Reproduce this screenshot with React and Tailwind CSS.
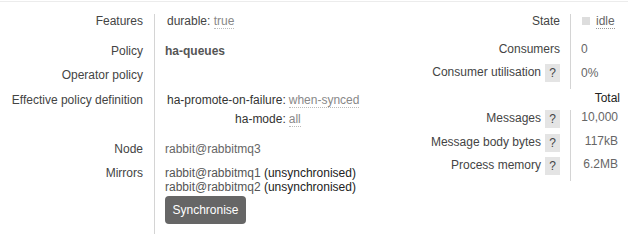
import React from 'react';

const Help = () => (
    <span className="inline-block ml-[4px] w-[15px] h-[18px] leading-[18px] text-center bg-[#e4e4e4] text-[#444] align-middle">?</span>
);

const LeftRow = ({ label, h, children }) => (
    <div className="flex" style={{ height: h }}>
        <div className="w-[154px] shrink-0 text-right pr-[11px] text-[#444]">{label}</div>
        <div className="border-l border-[#d4d4d4] pl-[10px] shrink-0">{children}</div>
    </div>
);

const RightRow = ({ label, h, help, children }) => (
    <div className="flex" style={{ height: h }}>
        <div className="w-[140px] shrink-0 text-right pr-[10px] text-[#444]">
            {label}{help && <Help />}
        </div>
        <div className="border-l border-[#d4d4d4] w-[48px] text-right text-[#666]">{children}</div>
    </div>
);

const Dotted = ({ children }) => (
    <span className="text-[#888] border-b border-dotted border-[#bbb]">{children}</span>
);

export default function App() {
    return (
        <div className="w-[628px] h-[238px] bg-white text-[12px] leading-[14px] overflow-hidden" style={{ fontFamily: '"Liberation Sans", Arial, sans-serif' }}>
            <div className="mt-[1px] border-t border-[#ececec]" />
            <div className="flex pt-[12px]">
                <div className="flex flex-col shrink-0">
                    <LeftRow label="Features" h={30}>
                        <span className="pl-[2px] text-[#444]">durable:</span> <Dotted>true</Dotted>
                    </LeftRow>
                    <LeftRow label="Policy" h={24}>
                        <span className="font-bold text-[#555]">ha-queues</span>
                    </LeftRow>
                    <LeftRow label="Operator policy" h={25} />
                    <LeftRow label="Effective policy definition" h={49}>
                        <div className="grid grid-cols-[auto_auto] auto-rows-[19px] pl-[2px] justify-start">
                            <span className="text-right text-[#333]">ha-promote-on-failure:</span>
                            <span className="pl-[3px]"><Dotted>when-synced</Dotted></span>
                            <span className="text-right text-[#333]">ha-mode:</span>
                            <span className="pl-[3px]"><Dotted>all</Dotted></span>
                        </div>
                    </LeftRow>
                    <LeftRow label="Node" h={24}>
                        <span className="text-[#666]">rabbit@rabbitmq3</span>
                    </LeftRow>
                    <LeftRow label="Mirrors" h={68}>
                        <div className="text-[#555]">rabbit@rabbitmq1 <span className="text-[#222]">(unsynchronised)</span></div>
                        <div className="text-[#555]">rabbit@rabbitmq2 <span className="text-[#222]">(unsynchronised)</span></div>
                        <button className="mt-[2px] w-[81px] h-[28px] rounded-[4px] bg-[#666] text-white text-[12px]">Synchronise</button>
                    </LeftRow>
                </div>
                <div className="flex flex-col ml-auto mr-[10px]">
                    <div className="flex flex-col ml-[-30px]">
                        <div className="flex" style={{ height: 28 }}>
                            <div className="w-[170px] shrink-0 text-right pr-[10px] text-[#444]">State</div>
                            <div className="border-l border-[#d4d4d4] w-[48px] pl-[11px] text-[#666] flex">
                                <span className="inline-block w-[8px] h-[8px] bg-[#ddd] mt-[3px] mr-[6px]" />
                                <span className="border-b border-dotted border-[#999] h-[15px]">idle</span>
                            </div>
                        </div>
                        <div className="flex" style={{ height: 24 }}>
                            <div className="w-[170px] shrink-0 text-right pr-[10px] text-[#444]">Consumers</div>
                            <div className="border-l border-[#d4d4d4] w-[48px] pl-[10px] text-[#666]">0</div>
                        </div>
                        <div className="flex" style={{ height: 23 }}>
                            <div className="w-[170px] shrink-0 text-right pr-[10px] text-[#444] mt-[-2px]">Consumer utilisation<Help /></div>
                            <div className="border-l border-[#d4d4d4] w-[48px] pl-[10px] text-[#666]">0%</div>
                        </div>
                    </div>
                    <div className="text-right text-[#222] mt-[2px] h-[19px] mr-[-2px]">Total</div>
                    <div className="flex flex-col">
                        <RightRow label="Messages" h={24} help>10,000</RightRow>
                        <RightRow label="Message body bytes" h={23} help>117kB</RightRow>
                        <RightRow label="Process memory" h={24} help>6.2MB</RightRow>
                    </div>
                </div>
            </div>
        </div>
    );
}
